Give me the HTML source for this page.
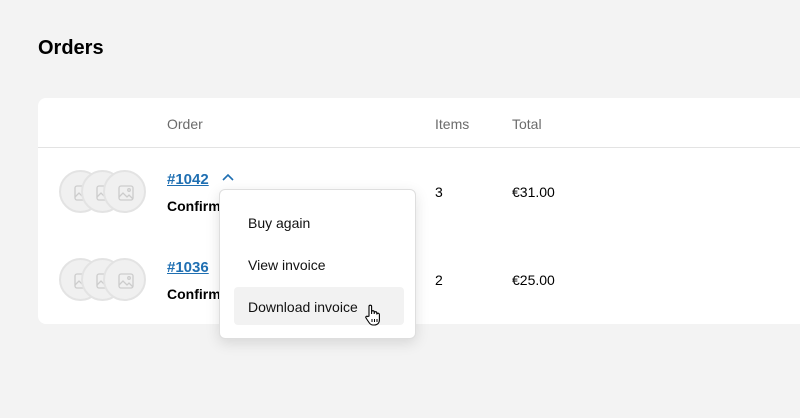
<!DOCTYPE html>
<html><head><style>
*{margin:0;padding:0;box-sizing:border-box}
body{width:800px;height:418px;background:#f3f3f3;font-family:"Liberation Sans",Arial,sans-serif;position:relative;overflow:hidden;color:#000}
.t{position:absolute}
h1{position:absolute;left:38px;top:37px;font-size:20px;font-weight:bold}
.card{position:absolute;left:38px;top:98px;width:780px;height:226px;background:#fff;border-radius:8px}
.hd{color:#6b6b6b;font-size:14px}
.line{position:absolute;left:38px;top:147px;width:762px;height:1px;background:#e3e3e3}
.c{position:absolute;width:43px;height:43px;border-radius:50%;background:#f0f0f0;border:2px solid #e3e3e3}
.c svg{position:absolute;left:12px;top:12px}
.lnk{color:#1f6fb2;text-decoration:underline;font-weight:bold;font-size:15px}
.b{font-weight:bold;font-size:14px}
.n{font-size:14px}
.dd{position:absolute;left:219px;top:189px;width:197px;height:150px;background:#fff;border:1px solid #dedede;border-radius:6px;box-shadow:0 4px 14px rgba(0,0,0,.12)}
.it{position:absolute;left:28px;font-size:14px;color:#111}
.hl{position:absolute;left:14px;top:97px;width:170px;height:38px;background:#f2f2f2;border-radius:4px}
</style></head><body>
<h1>Orders</h1>
<div class="card"></div>
<div class="line"></div>
<div class="t hd" style="left:167px;top:116px">Order</div>
<div class="t hd" style="left:435px;top:116px">Items</div>
<div class="t hd" style="left:512px;top:116px">Total</div>

<div class="c" style="left:59px;top:170px"><svg width="18" height="18" viewBox="0 0 18 18" fill="none" stroke="#ccc" stroke-width="1.3"><rect x="2" y="2" width="14" height="14" rx="2"/><path d="M2 13l4-4 4 4 2-2 4 4"/><circle cx="12" cy="6" r="1.3"/></svg></div>
<div class="c" style="left:81px;top:170px"><svg width="18" height="18" viewBox="0 0 18 18" fill="none" stroke="#ccc" stroke-width="1.3"><rect x="2" y="2" width="14" height="14" rx="2"/><path d="M2 13l4-4 4 4 2-2 4 4"/><circle cx="12" cy="6" r="1.3"/></svg></div>
<div class="c" style="left:103px;top:170px"><svg width="18" height="18" viewBox="0 0 18 18" fill="none" stroke="#ccc" stroke-width="1.3"><rect x="2" y="2" width="14" height="14" rx="2"/><path d="M2 13l4-4 4 4 2-2 4 4"/><circle cx="12" cy="6" r="1.3"/></svg></div>
<div class="c" style="left:59px;top:258px"><svg width="18" height="18" viewBox="0 0 18 18" fill="none" stroke="#ccc" stroke-width="1.3"><rect x="2" y="2" width="14" height="14" rx="2"/><path d="M2 13l4-4 4 4 2-2 4 4"/><circle cx="12" cy="6" r="1.3"/></svg></div>
<div class="c" style="left:81px;top:258px"><svg width="18" height="18" viewBox="0 0 18 18" fill="none" stroke="#ccc" stroke-width="1.3"><rect x="2" y="2" width="14" height="14" rx="2"/><path d="M2 13l4-4 4 4 2-2 4 4"/><circle cx="12" cy="6" r="1.3"/></svg></div>
<div class="c" style="left:103px;top:258px"><svg width="18" height="18" viewBox="0 0 18 18" fill="none" stroke="#ccc" stroke-width="1.3"><rect x="2" y="2" width="14" height="14" rx="2"/><path d="M2 13l4-4 4 4 2-2 4 4"/><circle cx="12" cy="6" r="1.3"/></svg></div>

<div class="t lnk" style="left:167px;top:171px">#1042</div>
<svg class="t" style="left:221px;top:172px" width="14" height="10" viewBox="0 0 14 10"><path d="M2 8l5-5 5 5" fill="none" stroke="#1f6fb2" stroke-width="1.6"/></svg>
<div class="t b" style="left:167px;top:198px">Confirmed</div>
<div class="t n" style="left:435px;top:184px">3</div>
<div class="t n" style="left:512px;top:184px">€31.00</div>

<div class="t lnk" style="left:167px;top:259px">#1036</div>
<div class="t b" style="left:167px;top:286px">Confirmed</div>
<div class="t n" style="left:435px;top:272px">2</div>
<div class="t n" style="left:512px;top:272px">€25.00</div>

<div class="dd">
<div class="hl"></div>
<div class="it" style="top:25px">Buy again</div>
<div class="it" style="top:67px">View invoice</div>
<div class="it" style="top:109px">Download invoice</div>
</div>
<svg class="t" style="left:364px;top:303px" width="18" height="24" viewBox="0 0 18 24"><path d="M5 13V3.5a1.3 1.3 0 0 1 2.6 0V11V9a1.3 1.3 0 0 1 2.6 0v2V10a1.3 1.3 0 0 1 2.6 0v1.5a1.3 1.3 0 0 1 2.6 0V17c0 3-2 5-5 5H9c-2 0-3-1-4-2.5L2 15c-.8-1.2.8-2.4 1.8-1.4z" fill="#fff" stroke="#000" stroke-width="1.1"/><path d="M8 16v3M10.5 16v3M13 16v3" stroke="#000" stroke-width="1"/></svg>
</body></html>
